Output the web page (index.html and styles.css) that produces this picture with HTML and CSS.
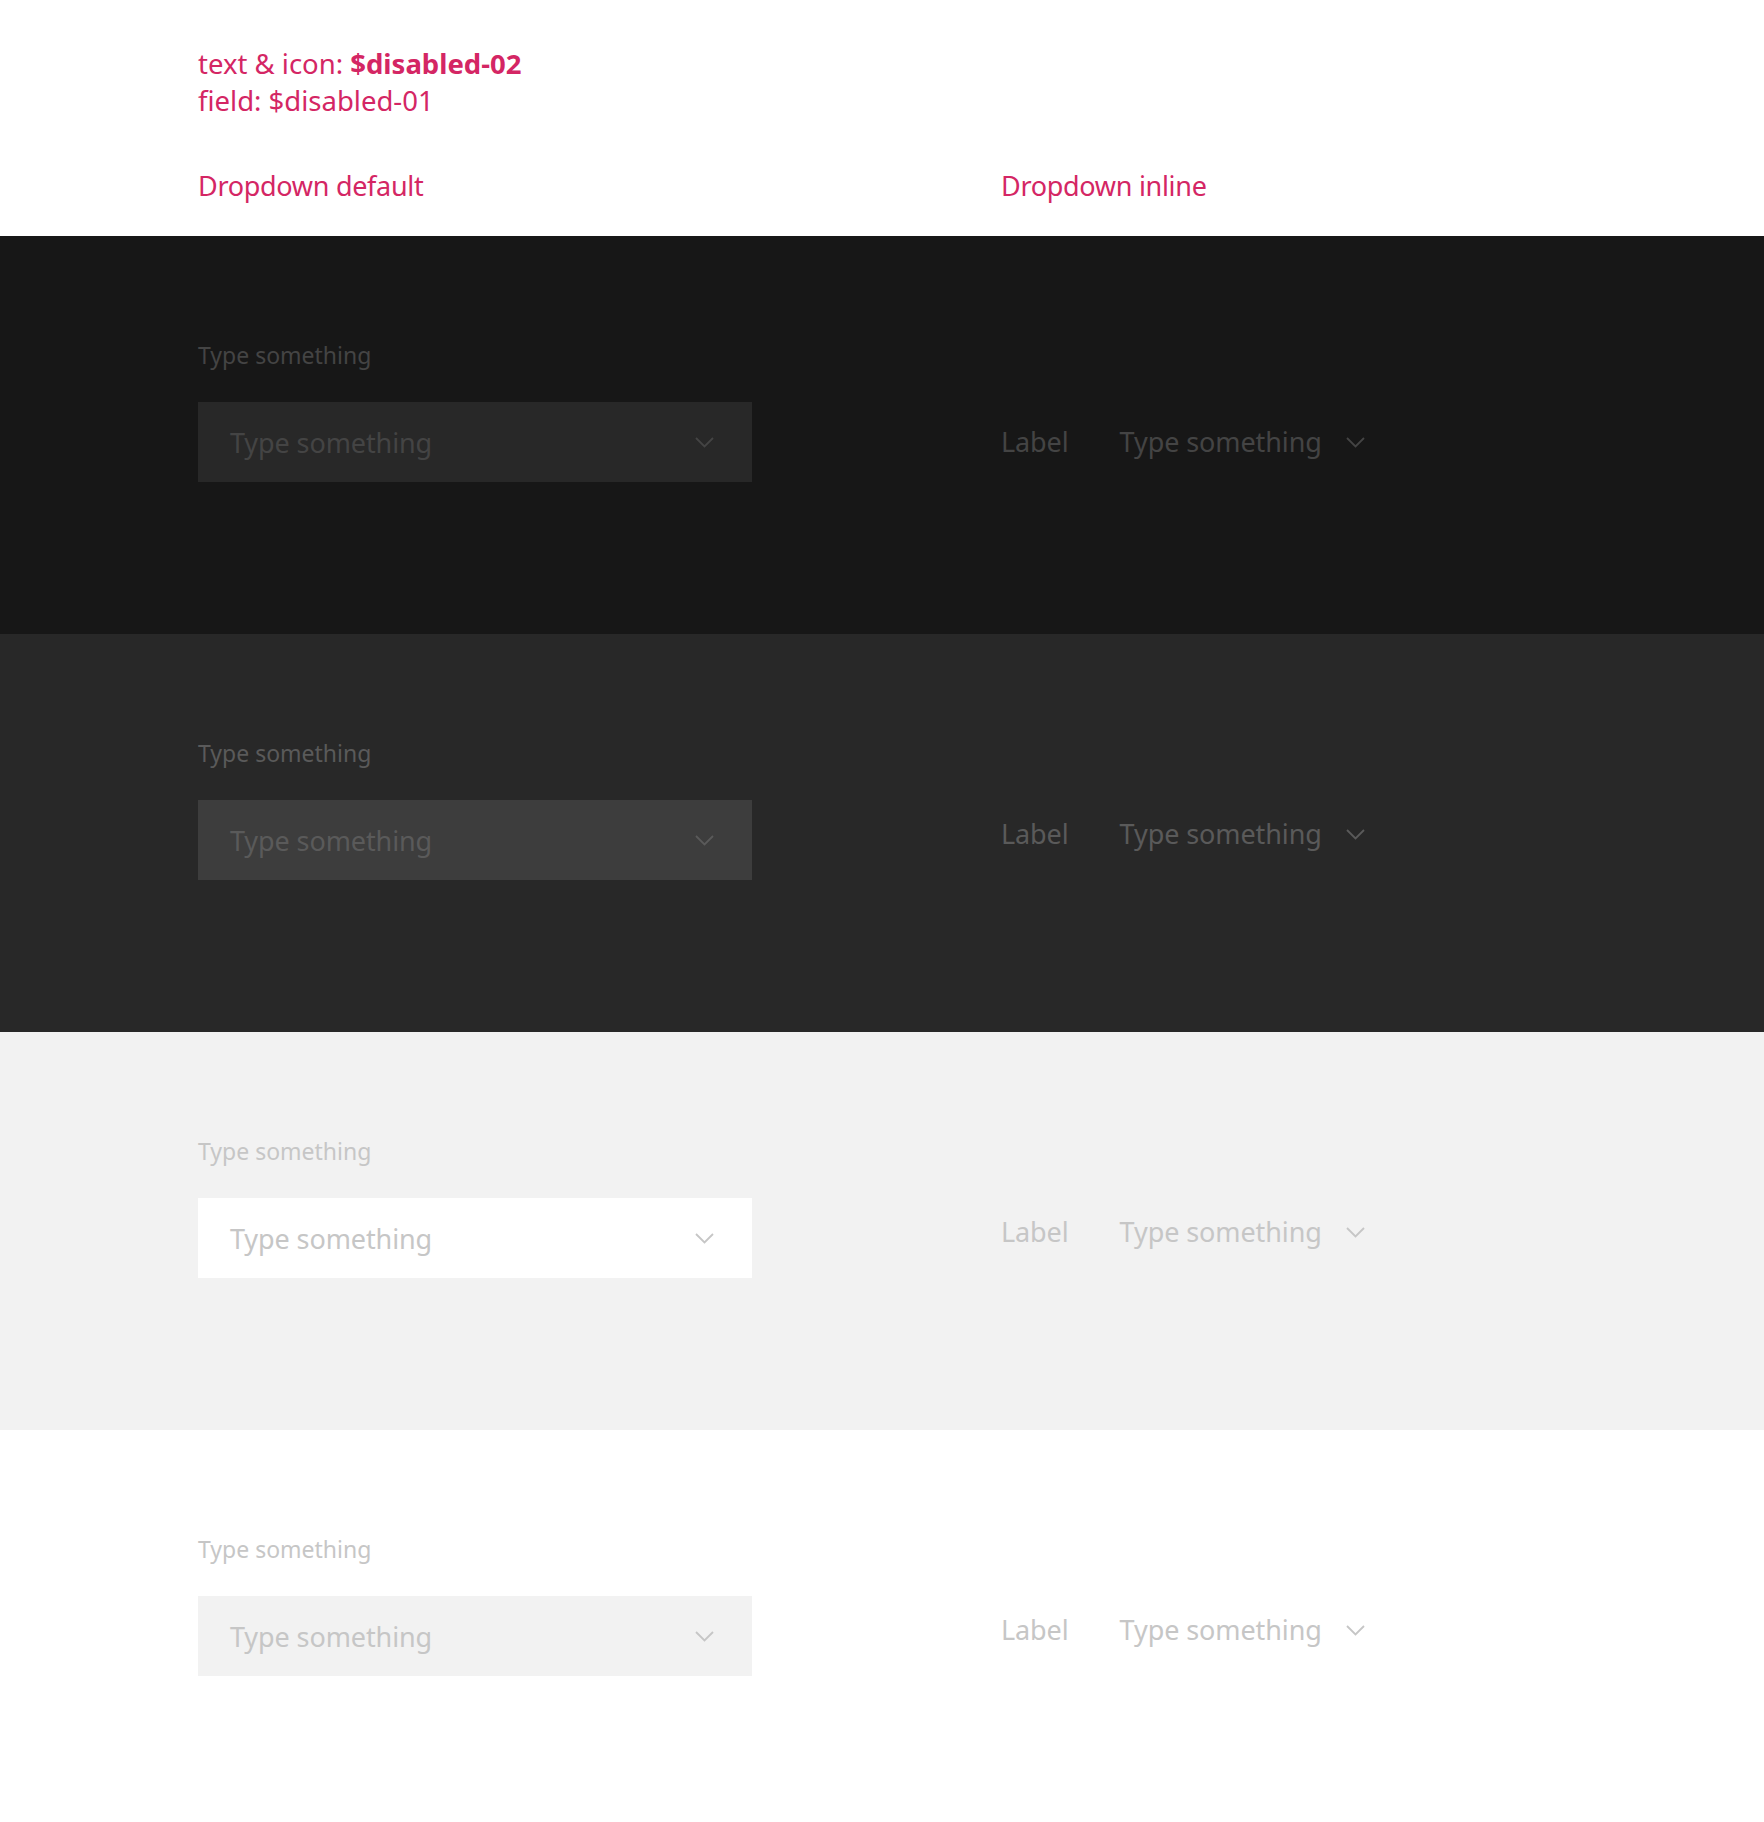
FILE: index.html
```html
<!DOCTYPE html>
<html lang="en">
<head>
    <meta charset="UTF-8">
    <meta name="viewport" content="width=device-width, initial-scale=1.0">
    <title>Dropdown disabled states</title>
    <link rel="stylesheet" href="styles.css">
</head>
<body>
    <header class="intro">
        <p class="note">text &amp; icon: <strong>$disabled-02</strong></p>
        <p class="note">field: $disabled-01</p>
        <div class="titles">
            <span class="title">Dropdown default</span>
            <span class="title">Dropdown inline</span>
        </div>
    </header>

    <!-- one band per theme: g100, g90, g10, white -->
    <section class="band band-g100">
        <div class="dropdown">
            <div class="dropdown-label">Type something</div>
            <div class="dropdown-field">
                <span>Type something</span>
                <svg class="chevron" width="19" height="11" viewBox="0 0 19 11"><polyline points="1,1 9.5,9.5 18,1" /></svg>
            </div>
        </div>
        <div class="inline">
            <span class="inline-label">Label</span>
            <span class="inline-value">Type something</span>
            <svg class="chevron" width="19" height="11" viewBox="0 0 19 11"><polyline points="1,1 9.5,9.5 18,1" /></svg>
        </div>
    </section>

    <section class="band band-g90">
        <div class="dropdown">
            <div class="dropdown-label">Type something</div>
            <div class="dropdown-field">
                <span>Type something</span>
                <svg class="chevron" width="19" height="11" viewBox="0 0 19 11"><polyline points="1,1 9.5,9.5 18,1" /></svg>
            </div>
        </div>
        <div class="inline">
            <span class="inline-label">Label</span>
            <span class="inline-value">Type something</span>
            <svg class="chevron" width="19" height="11" viewBox="0 0 19 11"><polyline points="1,1 9.5,9.5 18,1" /></svg>
        </div>
    </section>

    <section class="band band-g10">
        <div class="dropdown">
            <div class="dropdown-label">Type something</div>
            <div class="dropdown-field">
                <span>Type something</span>
                <svg class="chevron" width="19" height="11" viewBox="0 0 19 11"><polyline points="1,1 9.5,9.5 18,1" /></svg>
            </div>
        </div>
        <div class="inline">
            <span class="inline-label">Label</span>
            <span class="inline-value">Type something</span>
            <svg class="chevron" width="19" height="11" viewBox="0 0 19 11"><polyline points="1,1 9.5,9.5 18,1" /></svg>
        </div>
    </section>

    <section class="band band-white">
        <div class="dropdown">
            <div class="dropdown-label">Type something</div>
            <div class="dropdown-field">
                <span>Type something</span>
                <svg class="chevron" width="19" height="11" viewBox="0 0 19 11"><polyline points="1,1 9.5,9.5 18,1" /></svg>
            </div>
        </div>
        <div class="inline">
            <span class="inline-label">Label</span>
            <span class="inline-value">Type something</span>
            <svg class="chevron" width="19" height="11" viewBox="0 0 19 11"><polyline points="1,1 9.5,9.5 18,1" /></svg>
        </div>
    </section>
</body>
</html>
```

FILE: styles.css
```css
* {
    box-sizing: border-box;
}
body {
    margin: 0;
    font-family: "Noto Sans", "Open Sans", sans-serif;
    background: #fff;
}
.intro {
    height: 236px;
    padding: 45px 0 0 198px;
    color: #d42664;
}
.note {
    margin: 0;
    font-size: 27.5px;
    line-height: 37px;
}
.note strong {
    font-weight: 700;
}
.titles {
    display: grid;
    grid-template-columns: 803px auto;
    margin-top: 49px;
}
.title {
    font-size: 27px;
    line-height: 36px;
    letter-spacing: -0.3px;
}

.band {
    height: 398px;
    padding: 103px 0 0 198px;
    display: grid;
    grid-template-columns: 803px auto;
    align-items: start;
}
.band-white {
    height: 392px;
}
.dropdown-label {
    font-size: 23px;
    line-height: 32px;
    margin-bottom: 31px;
}
.dropdown-field {
    width: 554px;
    height: 80px;
    padding: 0 38px 0 32px;
    display: flex;
    align-items: center;
    justify-content: space-between;
    font-size: 27px;
    letter-spacing: -0.1px;
}
.chevron {
    display: block;
    fill: none;
    stroke: currentColor;
    stroke-width: 1.8;
}
.inline {
    display: flex;
    align-items: center;
    padding-top: 79px;
    font-size: 27px;
    line-height: 36px;
    letter-spacing: -0.1px;
}
.band-g100 .inline {
    padding-top: 85px;
}
.inline-label {
    margin-right: 51px;
}
.inline-value {
    margin-right: 24px;
}

.band-g100 { background: #171717; color: #444; }
.band-g100 .dropdown-field { background: #282828; }
.band-g90 { background: #282828; color: #5a5a5a; }
.band-g90 .dropdown-field { background: #3d3d3d; }
.band-g10 { background: #f2f2f2; color: #c6c6c6; }
.band-g10 .dropdown-field { background: #fff; }
.band-white { background: #fff; color: #c6c6c6; }
.band-white .dropdown-field { background: #f2f2f2; }
```
